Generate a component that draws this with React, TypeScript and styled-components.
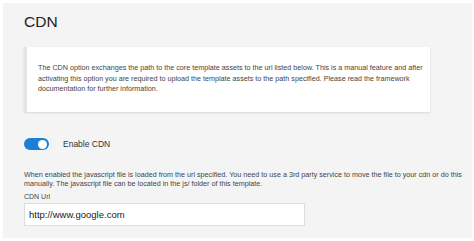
import styled, { createGlobalStyle } from 'styled-components';

const GlobalStyle = createGlobalStyle`
  body {
    margin: 0;
    background: #fff;
    font-family: 'Liberation Sans', Arial, sans-serif;
  }
`;

const Panel = styled.div`
  margin: 3px;
  width: 469px;
  height: 235px;
  box-sizing: border-box;
  background: #f4f4f4;
  padding: 9.5px 0 0 21px;
  display: flex;
  flex-direction: column;
  align-items: flex-start;
`;

const Title = styled.h1`
  margin: 0;
  font-size: 15.5px;
  line-height: 18px;
  font-weight: 400;
  color: #222;
`;

const Notice = styled.div`
  margin-top: 16.5px;
  width: 406px;
  height: 65px;
  box-sizing: border-box;
  background: #fff;
  border-left: 3px solid #e4e4e4;
  box-shadow: 0 1px 2px rgba(0, 0, 0, 0.12);
  padding: 16px 4px 0 11px;
  font-size: 7.2px;
  line-height: 10.5px;
  color: #444;
`;

const ToggleRow = styled.label`
  margin-top: 26px;
  display: flex;
  align-items: center;
  gap: 14px;
  height: 12px;
  font-size: 8.5px;
  color: #333;
`;

const Switch = styled.span<{ $on: boolean }>`
  position: relative;
  width: 25px;
  height: 12px;
  border-radius: 6px;
  background: ${(p) => (p.$on ? '#1b7fd6' : '#ccc')};

  &::after {
    content: '';
    position: absolute;
    top: 1.5px;
    left: ${(p) => (p.$on ? '14px' : '1.5px')};
    width: 9px;
    height: 9px;
    border-radius: 50%;
    background: #fff;
  }
`;

const Help = styled.p`
  margin: 20px 0 0;
  width: 440px;
  font-size: 7.2px;
  line-height: 9px;
  color: #444;
`;

const FieldLabel = styled.div`
  margin-top: 3.5px;
  font-size: 7px;
  line-height: 9px;
  color: #444;
`;

const UrlInput = styled.input`
  margin-top: 2.5px;
  width: 281px;
  height: 23px;
  box-sizing: border-box;
  border: 1px solid #dcdcdc;
  background: #fff;
  padding: 0 4px;
  font-family: 'Liberation Sans', Arial, sans-serif;
  font-size: 9.5px;
  color: #222;
  outline: none;
`;

export default function App() {
  return (
    <>
      <GlobalStyle />
      <Panel>
        <Title>CDN</Title>
        <Notice>
          The CDN option exchanges the path to the core template assets to the url listed below. This is a manual
          feature and after activating this option you are required to upload the template assets to the path
          specified. Please read the framework documentation for further information.
        </Notice>
        <ToggleRow>
          <Switch $on />
          Enable CDN
        </ToggleRow>
        <Help>
          When enabled the javascript file is loaded from the url specified. You need to use a 3rd party service to
          move the file to your cdn or do this manually. The javascript file can be located in the js/ folder of this
          template.
        </Help>
        <FieldLabel>CDN Url</FieldLabel>
        <UrlInput defaultValue="http://www.google.com" />
      </Panel>
    </>
  );
}
